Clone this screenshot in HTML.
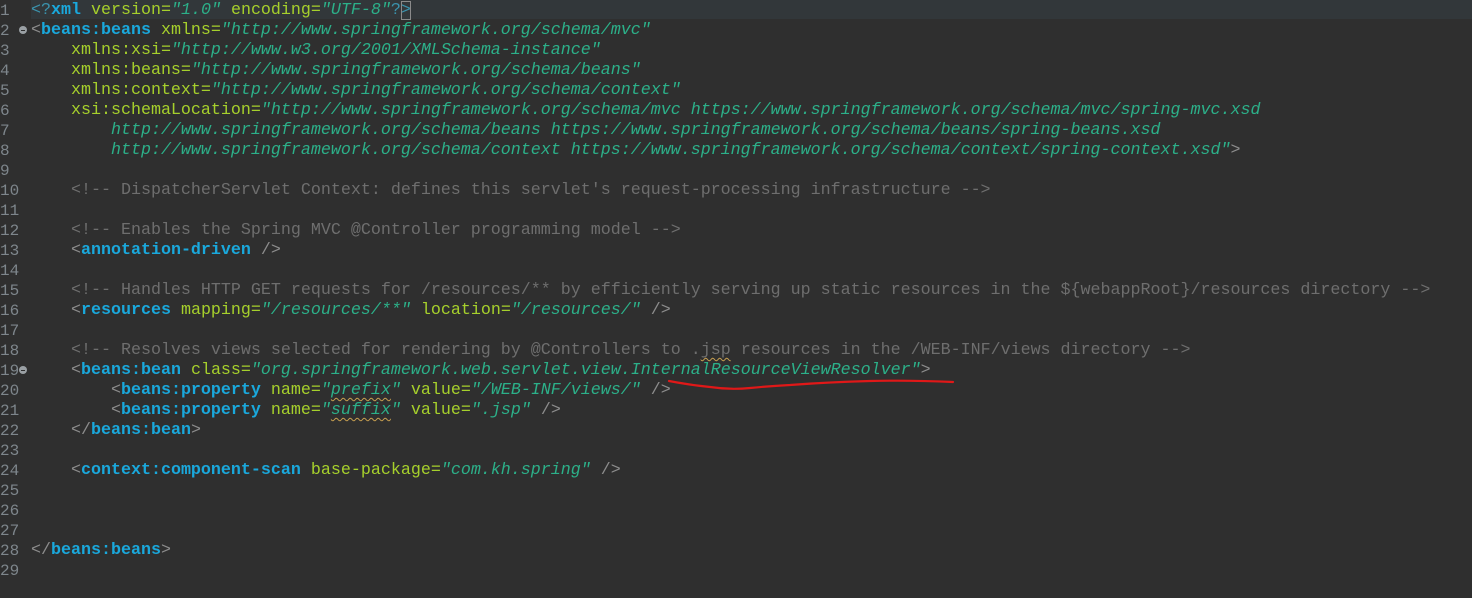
<!DOCTYPE html>
<html><head><meta charset="utf-8"><style>
html,body{margin:0;padding:0;background:#2f2f2f;width:1472px;height:598px;overflow:hidden}
.l{position:absolute;left:0;height:20px;line-height:20px;font-family:"Liberation Mono",monospace;font-size:16.67px;white-space:pre;color:#a6d02c}
.n{position:absolute;left:0;height:20px;line-height:20px;font-family:"Liberation Mono",monospace;font-size:16px;color:#7e868c}
.c{left:31px}
.t{color:#1aa8dc;font-weight:bold}
.b{color:#8c8c8c}
.p{color:#3b93ad}
.v{color:#2cb089;font-style:italic}
.m{color:#6e6e6e}
.q{text-decoration:underline wavy #c8a050;text-decoration-thickness:1px;text-underline-offset:3px}
.f{position:absolute;left:19px;width:8px;height:8px;border-radius:50%;background:#9aa0a4}
.f::after{content:"";position:absolute;left:2px;top:3.5px;width:4px;height:1px;background:#2f2f2f}
.box{outline:1px solid #8a8a8a;outline-offset:-1px}
</style></head><body>
<div style="position:absolute;left:31px;top:0;width:1441px;height:19px;background:#32373a"></div>
<div class="n" style="top:1px">1</div>
<div class="n" style="top:21px">2</div>
<div class="n" style="top:41px">3</div>
<div class="n" style="top:61px">4</div>
<div class="n" style="top:81px">5</div>
<div class="n" style="top:101px">6</div>
<div class="n" style="top:121px">7</div>
<div class="n" style="top:141px">8</div>
<div class="n" style="top:161px">9</div>
<div class="n" style="top:181px">10</div>
<div class="n" style="top:201px">11</div>
<div class="n" style="top:221px">12</div>
<div class="n" style="top:241px">13</div>
<div class="n" style="top:261px">14</div>
<div class="n" style="top:281px">15</div>
<div class="n" style="top:301px">16</div>
<div class="n" style="top:321px">17</div>
<div class="n" style="top:341px">18</div>
<div class="n" style="top:361px">19</div>
<div class="n" style="top:381px">20</div>
<div class="n" style="top:401px">21</div>
<div class="n" style="top:421px">22</div>
<div class="n" style="top:441px">23</div>
<div class="n" style="top:461px">24</div>
<div class="n" style="top:481px">25</div>
<div class="n" style="top:501px">26</div>
<div class="n" style="top:521px">27</div>
<div class="n" style="top:541px">28</div>
<div class="n" style="top:561px">29</div>
<div class="f" style="top:26px"></div>
<div class="f" style="top:366px"></div>

<div class="l c" style="top:1px"><span class="p">&lt;?</span><span class="t">xml</span> version=<span class="v">"1.0"</span> encoding=<span class="v">"UTF-8"</span><span class="p">?</span><span class="p box">&gt;</span></div>
<div class="l c" style="top:21px"><span class="b">&lt;</span><span class="t">beans:beans</span> xmlns=<span class="v">"http://www.springframework.org/schema/mvc"</span></div>
<div class="l c" style="top:41px">    xmlns:xsi=<span class="v">"http://www.w3.org/2001/XMLSchema-instance"</span></div>
<div class="l c" style="top:61px">    xmlns:beans=<span class="v">"http://www.springframework.org/schema/beans"</span></div>
<div class="l c" style="top:81px">    xmlns:context=<span class="v">"http://www.springframework.org/schema/context"</span></div>
<div class="l c" style="top:101px">    xsi:schemaLocation=<span class="v">"http://www.springframework.org/schema/mvc https://www.springframework.org/schema/mvc/spring-mvc.xsd</span></div>
<div class="l c" style="top:121px"><span class="v">        http://www.springframework.org/schema/beans https://www.springframework.org/schema/beans/spring-beans.xsd</span></div>
<div class="l c" style="top:141px"><span class="v">        http://www.springframework.org/schema/context https://www.springframework.org/schema/context/spring-context.xsd"</span><span class="b">&gt;</span></div>
<div class="l c m" style="top:181px">    &lt;!-- DispatcherServlet Context: defines this servlet's request-processing infrastructure --&gt;</div>
<div class="l c m" style="top:221px">    &lt;!-- Enables the Spring MVC @Controller programming model --&gt;</div>
<div class="l c" style="top:241px">    <span class="b">&lt;</span><span class="t">annotation-driven</span> <span class="b">/&gt;</span></div>
<div class="l c m" style="top:281px">    &lt;!-- Handles HTTP GET requests for /resources/** by efficiently serving up static resources in the ${webappRoot}/resources directory --&gt;</div>
<div class="l c" style="top:301px">    <span class="b">&lt;</span><span class="t">resources</span> mapping=<span class="v">"/resources/**"</span> location=<span class="v">"/resources/"</span> <span class="b">/&gt;</span></div>
<div class="l c m" style="top:341px">    &lt;!-- Resolves views selected for rendering by @Controllers to .<span class="q">jsp</span> resources in the /WEB-INF/views directory --&gt;</div>
<div class="l c" style="top:361px">    <span class="b">&lt;</span><span class="t">beans:bean</span> class=<span class="v">"org.springframework.web.servlet.view.InternalResourceViewResolver"</span><span class="b">&gt;</span></div>
<div class="l c" style="top:381px">        <span class="b">&lt;</span><span class="t">beans:property</span> name=<span class="v">"<span class="q">prefix</span>"</span> value=<span class="v">"/WEB-INF/views/"</span> <span class="b">/&gt;</span></div>
<div class="l c" style="top:401px">        <span class="b">&lt;</span><span class="t">beans:property</span> name=<span class="v">"<span class="q">suffix</span>"</span> value=<span class="v">".jsp"</span> <span class="b">/&gt;</span></div>
<div class="l c" style="top:421px">    <span class="b">&lt;/</span><span class="t">beans:bean</span><span class="b">&gt;</span></div>
<div class="l c" style="top:461px">    <span class="b">&lt;</span><span class="t">context:component-scan</span> base-package=<span class="v">"com.kh.spring"</span> <span class="b">/&gt;</span></div>
<div class="l c" style="top:541px"><span class="b">&lt;/</span><span class="t">beans:beans</span><span class="b">&gt;</span></div>

<svg style="position:absolute;left:0;top:0" width="1472" height="598"><path d="M669 381 Q690 385 710 387 Q730 390 750 388 Q770 386 790 385 Q830 382 870 381 Q910 380 953 382" fill="none" stroke="#e01818" stroke-width="2.2" stroke-linecap="round"/></svg>
</body></html>
